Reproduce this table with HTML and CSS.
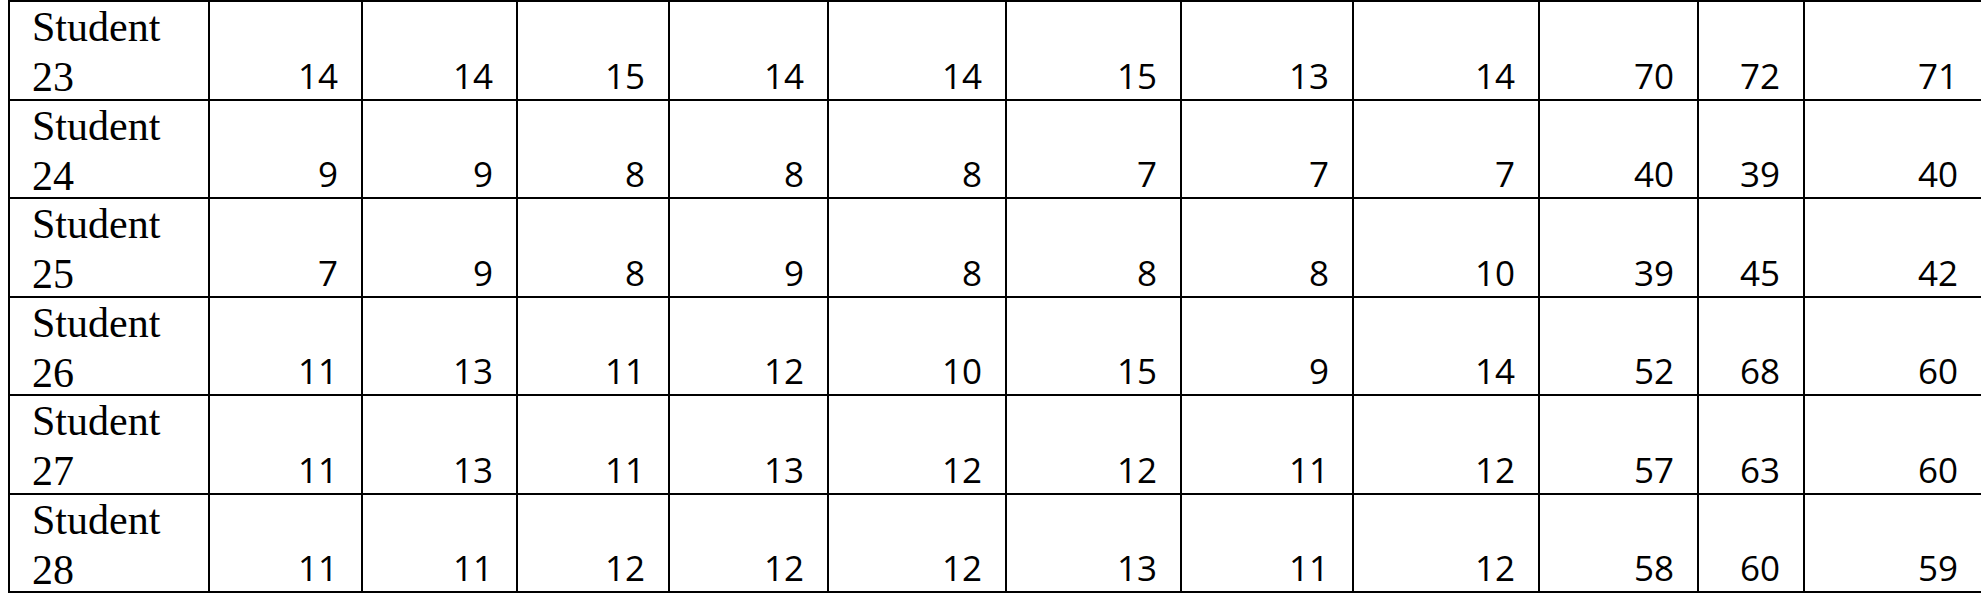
FILE: index.html
```html
<!DOCTYPE html>
<html>
<head>
<meta charset="utf-8">
<link rel="stylesheet" href="styles.css">
</head>
<body>
<div class="page">
<table class="scores">
<colgroup>
<col class="c-name">
<col class="c1"><col class="c2"><col class="c3"><col class="c4"><col class="c5"><col class="c6"><col class="c7"><col class="c8"><col class="c9"><col class="c10"><col class="c11">
</colgroup>
<tbody>
<tr><td class="name"><div class="label">Student<br>23</div></td><td>14</td><td>14</td><td>15</td><td>14</td><td>14</td><td>15</td><td>13</td><td>14</td><td>70</td><td>72</td><td>71</td></tr>
<tr><td class="name"><div class="label">Student<br>24</div></td><td>9</td><td>9</td><td>8</td><td>8</td><td>8</td><td>7</td><td>7</td><td>7</td><td>40</td><td>39</td><td>40</td></tr>
<tr><td class="name"><div class="label">Student<br>25</div></td><td>7</td><td>9</td><td>8</td><td>9</td><td>8</td><td>8</td><td>8</td><td>10</td><td>39</td><td>45</td><td>42</td></tr>
<tr><td class="name"><div class="label">Student<br>26</div></td><td>11</td><td>13</td><td>11</td><td>12</td><td>10</td><td>15</td><td>9</td><td>14</td><td>52</td><td>68</td><td>60</td></tr>
<tr><td class="name"><div class="label">Student<br>27</div></td><td>11</td><td>13</td><td>11</td><td>13</td><td>12</td><td>12</td><td>11</td><td>12</td><td>57</td><td>63</td><td>60</td></tr>
<tr><td class="name"><div class="label">Student<br>28</div></td><td>11</td><td>11</td><td>12</td><td>12</td><td>12</td><td>13</td><td>11</td><td>12</td><td>58</td><td>60</td><td>59</td></tr>
</tbody>
</table>
</div>
</body>
</html>
```
FILE: styles.css
```css
html, body {
  margin: 0;
  padding: 0;
  background: #ffffff;
  overflow: hidden;
}
.page {
  padding: 0 0 0 8px;
  width: 2100px;
}
.scores {
  border-collapse: collapse;
  table-layout: fixed;
  width: 1973px;
  color: #000000;
}
.c-name { width: 200px; }
.c1 { width: 153px; }
.c2 { width: 155px; }
.c3 { width: 152px; }
.c4 { width: 159px; }
.c5 { width: 178px; }
.c6 { width: 175px; }
.c7 { width: 172px; }
.c8 { width: 186px; }
.c9 { width: 159px; }
.c10 { width: 106px; }
.c11 { width: 178px; }
.scores tr {
  height: 98.5px;
}
.scores td {
  border: 2px solid #000000;
  padding: 0 23px 6px 22px;
  vertical-align: bottom;
  text-align: right;
  font-family: "Open Sans", "Noto Sans", sans-serif;
  font-size: 35px;
  line-height: 35px;
  overflow: visible;
}
.scores td.name {
  text-align: left;
  vertical-align: top;
  padding: 0 0 0 22px;
}
.label {
  height: 94px;
  font-family: "Liberation Serif", "Times New Roman", serif;
  font-size: 42px;
  line-height: 50px;
  white-space: nowrap;
}
```
